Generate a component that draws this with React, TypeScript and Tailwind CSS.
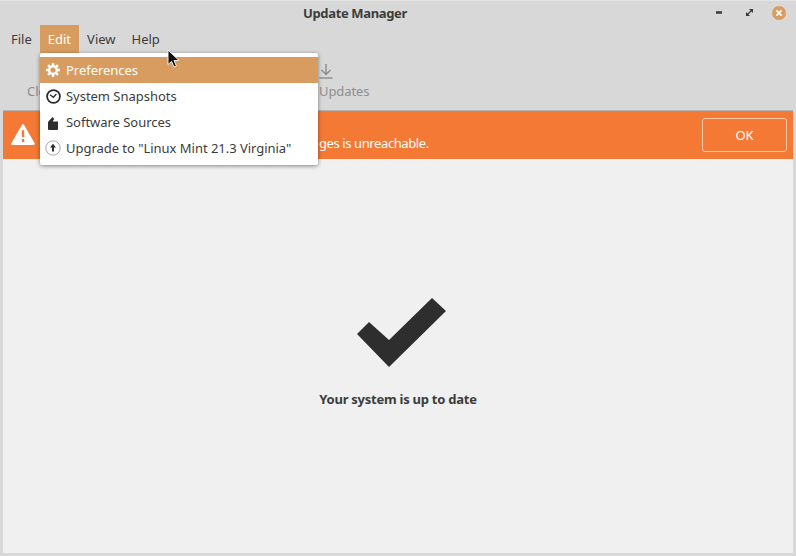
const font = "[font-family:'Noto_Sans',sans-serif]"

function MenuRow({ icon, label, active }: { icon: React.ReactNode; label: string; active?: boolean }) {
  return (
    <div className={`flex h-[26px] items-center ${active ? 'bg-[#d99c60] text-white' : 'text-[#3c3c3c]'}`}>
      <div className="flex w-[26px] justify-center">{icon}</div>
      <span className="pt-[2px] text-[13px] tracking-[-0.03px]">{label}</span>
    </div>
  )
}

function Gear() {
  return (
    <svg width="14" height="14" viewBox="0 0 16 16">
      <circle cx="8" cy="8" r="4.4" fill="none" stroke="#fff" strokeWidth="2.8" />
      <g stroke="#fff" strokeWidth="2.8">
        <path d="M8 0V3M8 13V16M0 8H3M13 8H16M2.4 2.4L4.5 4.5M11.5 11.5L13.6 13.6M13.6 2.4L11.5 4.5M4.5 11.5L2.4 13.6" />
      </g>
    </svg>
  )
}

function Clock() {
  return (
    <svg width="15" height="15" viewBox="0 0 15 15">
      <circle cx="7.5" cy="7.5" r="6.4" fill="none" stroke="#2a2a2a" strokeWidth="1.8" />
      <path d="M4 5.8L7.4 8.3L10.4 5" fill="none" stroke="#2a2a2a" strokeWidth="1.3" />
    </svg>
  )
}

function Sources() {
  return (
    <svg width="10" height="13" viewBox="0 0 10 13" className="mt-[3px]">
      <path d="M0 5L4.5 0L6.2 2L4.6 4.5H10V12Q10 13 9 13H1Q0 13 0 12Z" fill="#2e2e2e" />
    </svg>
  )
}

function UpgradeIcon() {
  return (
    <svg width="16" height="16" viewBox="0 0 16 16">
      <circle cx="8" cy="8" r="7.2" fill="#fff" stroke="#a8a8a8" strokeWidth="1" />
      <path d="M8 3.8L11 7.4H9V11.6H7V7.4H5Z" fill="#2e2e2e" />
    </svg>
  )
}

export default function App() {
  return (
    <div className={`relative flex h-[556px] w-[796px] flex-col overflow-hidden border-t border-[#e4e4e4] bg-[#d8d8d8] ${font}`}>
      <div className="flex h-[24px] shrink-0 items-center">
        <div className="flex-1 pr-[6px] text-center text-[13px] font-bold leading-none tracking-[-0.35px] text-[#3c3c3c]">Update Manager</div>
        <div className="flex items-center">
          <svg width="6" height="3" viewBox="0 0 6 3" className="mr-[24px] mb-[1px]">
            <rect width="6" height="2.5" y="0.25" fill="#3a3a3a" />
          </svg>
          <svg width="7" height="7" viewBox="0 0 7 7" className="mr-[19px] mb-[2px]">
            <path d="M3 0H7V4ZM0 3L4 7H0Z" fill="#3a3a3a" />
            <path d="M1 6L6 1" stroke="#3a3a3a" strokeWidth="1.2" />
          </svg>
          <div className="mr-[10px] flex h-[14px] w-[14px] items-center justify-center rounded-full bg-[#dc9b5f]">
            <svg width="8" height="8" viewBox="0 0 8 8">
              <path d="M1.4 1.4L6.6 6.6M6.6 1.4L1.4 6.6" stroke="#fff" strokeWidth="1.8" />
            </svg>
          </div>
        </div>
      </div>

      <div className="flex h-[28px] shrink-0 items-stretch pl-[3px] pt-[1px] text-[13px] text-[#3c3c3c]">
        <div className="flex items-center px-[8px]">File</div>
        <div className="-mt-[1px] flex items-center bg-[#d99c60] px-[8px] pt-[1px] text-white">Edit</div>
        <div className="flex items-center px-[8px]">View</div>
        <div className="flex items-center px-[8px]">Help</div>
      </div>

      <div className="mx-[3px] flex h-[58px] shrink-0 border-b border-[#b4b4b4] text-[13px] text-[#8e8e8e]">
        <div className="ml-[24px] flex w-[292px] flex-col items-start">
          <svg width="14" height="16" viewBox="0 0 14 16" className="ml-[9px] mt-[11px]">
            <path d="M5 8H13M5 8L8 5M5 8L8 11" fill="none" stroke="#8e8e8e" strokeWidth="1.5" />
          </svg>
          <span className="mt-[2px]">Clear</span>
        </div>
        <div className="flex flex-col items-start">
          <svg width="14" height="16" viewBox="0 0 14 16" className="mt-[10px]">
            <path d="M7 1V11M2.5 7L7 11.5L11.5 7M0.5 15H13.5" fill="none" stroke="#8e8e8e" strokeWidth="1.5" />
          </svg>
          <span className="mt-[3px] tracking-[-0.1px]">Updates</span>
        </div>
      </div>

      <div className="mx-[3px] flex h-[48px] shrink-0 items-center bg-[#f37935] pr-[6px] text-white">
        <svg width="24" height="23" viewBox="0 0 26 24" className="ml-[8px] mb-[2px]">
          <path d="M13 2L24.5 22H1.5Z" fill="#fff" stroke="#fff" strokeWidth="2.5" strokeLinejoin="round" />
          <path d="M13 7.5V15M13 17V20" stroke="#f37935" strokeWidth="2.6" />
        </svg>
        <div className="ml-[284px] self-end pb-[6px] text-[13px] tracking-[-0.4px] whitespace-nowrap">ges is unreachable.</div>
        <div className="ml-auto flex h-[34px] w-[85px] items-center justify-center rounded-[3px] border border-[#fbc7a6] pt-[1px] text-[13px]">OK</div>
      </div>

      <div className="mx-[3px] mb-[3px] flex flex-1 flex-col items-center bg-[#f0f0f0]">
        <svg width="90" height="70" viewBox="0 0 90 70" className="ml-[7px] mt-[139px]">
          <path d="M0 36L12 24L32 42L75 0L89 13L32 69Z" fill="#2e2e2e" />
        </svg>
        <div className="mt-[22px] text-[13px] font-bold tracking-[-0.25px] text-[#3c3c3c]">Your system is up to date</div>
      </div>

      <div className="absolute left-[40px] top-[52px] w-[278px] rounded-[2px] bg-white pb-[4px] pt-[4px] shadow-[0_1px_4px_rgba(0,0,0,0.45)]">
        <MenuRow active icon={<Gear />} label="Preferences" />
        <MenuRow icon={<Clock />} label="System Snapshots" />
        <MenuRow icon={<Sources />} label="Software Sources" />
        <MenuRow icon={<UpgradeIcon />} label={'Upgrade to "Linux Mint 21.3 Virginia"'} />
      </div>

      <svg width="14" height="20" viewBox="0 0 14 20" className="absolute left-[167px] top-[48px]">
        <path d="M1 1V15.5L4.6 12.4L7 18L9.4 17L7 11.5H12Z" fill="#111" stroke="#fff" strokeWidth="0.9" />
      </svg>
    </div>
  )
}
